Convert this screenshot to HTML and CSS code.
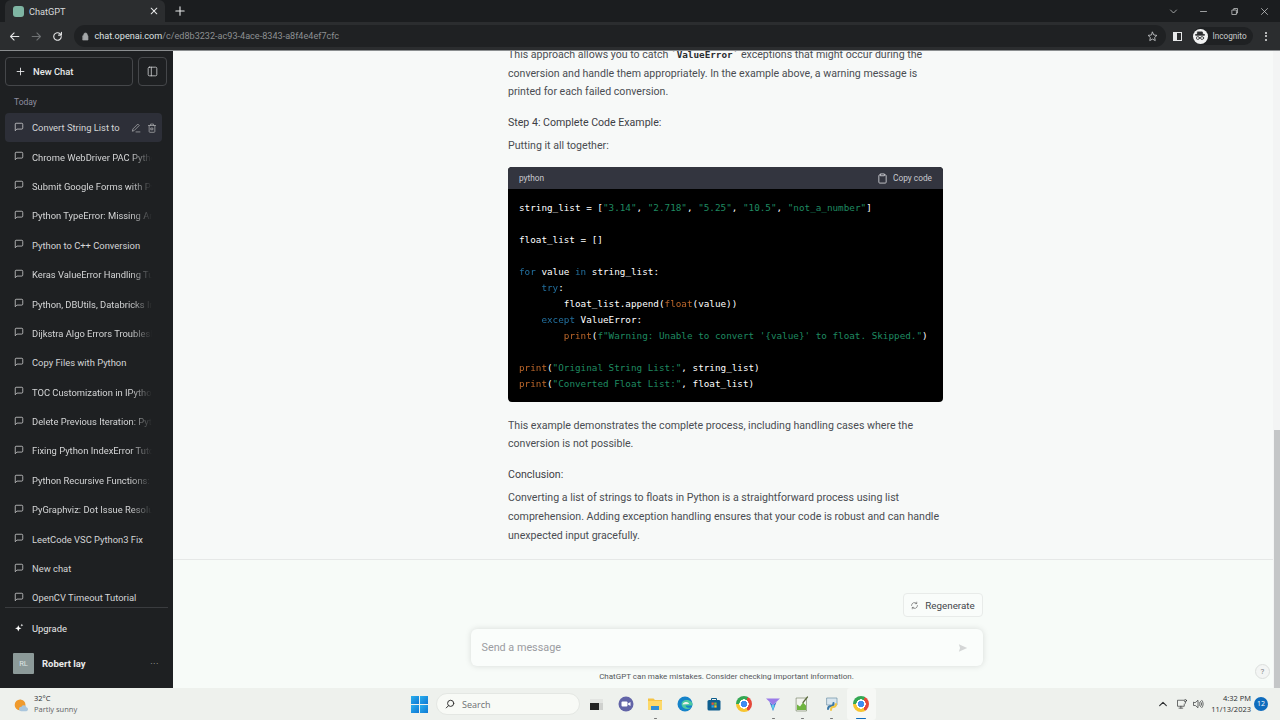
FILE: index.html
```html
<!DOCTYPE html>
<html lang="en">
<head>
    <meta charset="UTF-8">
    <title>ChatGPT</title>
    <link rel="stylesheet" href="styles.css">
</head>
<body>
    <svg class="defs">
        <symbol id="bubble" viewBox="0 0 24 24"><path d="M21 15a2 2 0 0 1-2 2H7l-4 4V5a2 2 0 0 1 2-2h14a2 2 0 0 1 2 2z"/></symbol>
    </svg>

    <header class="browser">
        <div class="tabstrip">
            <div class="tab">
                <span class="favicon"></span>
                <span class="tab-title">ChatGPT</span>
                <svg class="tab-close" viewBox="0 0 10 10"><path d="M1.5 1.5l7 7M8.5 1.5l-7 7"/></svg>
            </div>
            <svg class="new-tab" viewBox="0 0 12 12"><path d="M6 1v10M1 6h10"/></svg>
            <div class="window-btns">
                <svg viewBox="0 0 12 12"><path d="M2 4l4 4 4-4"/></svg>
                <svg viewBox="0 0 12 12"><path d="M2 6h8"/></svg>
                <svg viewBox="0 0 12 12"><path d="M3 4h5.500v6H3zM5 4V2h5v6H8.500"/></svg>
                <svg viewBox="0 0 12 12"><path d="M2 2l8 8M10 2l-8 8"/></svg>
            </div>
        </div>
        <div class="toolbar">
            <svg class="nav-btn" viewBox="0 0 14 14"><path d="M12.500 7H2M6.500 2.500L2 7l4.500 4.500"/></svg>
            <svg class="nav-btn dim" viewBox="0 0 14 14"><path d="M1.500 7H12M7.500 2.500L12 7l-4.500 4.500"/></svg>
            <svg class="nav-btn" viewBox="0 0 14 14"><path d="M11.800 7a4.800 4.800 0 1 1-1.400-3.400L12 5.200M12 1.500v3.700H8.300"/></svg>
            <div class="omnibox">
                <svg class="lock" viewBox="0 0 10 12"><path d="M2.500 5V3.500a2.500 2.500 0 0 1 5 0V5M1.500 5h7v6h-7z"/></svg>
                <span class="url">chat.openai.com<span class="url-rest">/c/ed8b3232-ac93-4ace-8343-a8f4e4ef7cfc</span></span>
                <svg class="star" viewBox="0 0 14 14"><path d="M7 1.500l1.700 3.600 3.900.5-2.900 2.700.8 3.900L7 10.300l-3.500 1.900.8-3.900L1.400 5.600l3.900-.5z"/></svg>
            </div>
            <span class="side-panel"></span>
            <div class="incognito">
                <span class="spy">
                    <svg viewBox="0 0 16 16"><path class="spy-hat" d="M5 2.500h6l1 3.500h2v1H2V6h2z"/><circle cx="5.200" cy="10.700" r="2"/><circle cx="10.800" cy="10.700" r="2"/><path d="M7.200 10.500h1.600"/></svg>
                </span>
                <span>Incognito</span>
            </div>
            <span class="kebab"><i></i><i></i><i></i></span>
        </div>
    </header>

    <div class="app">
        <nav class="sidebar">
            <div class="side-top">
                <div class="new-chat">
                    <svg viewBox="0 0 12 12"><path d="M6 1.500v9M1.500 6h9"/></svg>
                    <span>New Chat</span>
                </div>
                <div class="hide-side">
                    <svg viewBox="0 0 14 14"><rect x="1.500" y="1.500" width="11" height="11" rx="1.500"/><path d="M5.500 1.500v11"/></svg>
                </div>
            </div>
            <div class="day-label">Today</div>
            <ul class="chat-list">
                <li class="chat-item active">
                    <svg class="bubble"><use href="#bubble"/></svg>
                    <span class="chat-name">Convert String List to</span>
                    <svg class="row-icon" viewBox="0 0 14 14"><path d="M2 11l.7-2.700L9.500 1.500l2 2-6.800 6.800zM7 12.500h5.500"/></svg>
                    <svg class="row-icon" viewBox="0 0 14 14"><path d="M3 3.500v8.500a1 1 0 0 0 1 1h6a1 1 0 0 0 1-1V3.500M2 3.500h10M5 3.500V1.500h4v2M5.800 7h2.400v2.500H5.800z"/></svg>
                </li>
                <li class="chat-item"><svg class="bubble"><use href="#bubble"/></svg><span class="chat-name fade">Chrome WebDriver PAC Python</span></li>
                <li class="chat-item"><svg class="bubble"><use href="#bubble"/></svg><span class="chat-name fade">Submit Google Forms with Python</span></li>
                <li class="chat-item"><svg class="bubble"><use href="#bubble"/></svg><span class="chat-name fade">Python TypeError: Missing Argument</span></li>
                <li class="chat-item"><svg class="bubble"><use href="#bubble"/></svg><span class="chat-name">Python to C++ Conversion</span></li>
                <li class="chat-item"><svg class="bubble"><use href="#bubble"/></svg><span class="chat-name fade">Keras ValueError Handling Tutorial</span></li>
                <li class="chat-item"><svg class="bubble"><use href="#bubble"/></svg><span class="chat-name fade">Python, DBUtils, Databricks Integration</span></li>
                <li class="chat-item"><svg class="bubble"><use href="#bubble"/></svg><span class="chat-name fade">Dijkstra Algo Errors Troubleshoot</span></li>
                <li class="chat-item"><svg class="bubble"><use href="#bubble"/></svg><span class="chat-name">Copy Files with Python</span></li>
                <li class="chat-item"><svg class="bubble"><use href="#bubble"/></svg><span class="chat-name fade">TOC Customization in IPython</span></li>
                <li class="chat-item"><svg class="bubble"><use href="#bubble"/></svg><span class="chat-name fade">Delete Previous Iteration: Python</span></li>
                <li class="chat-item"><svg class="bubble"><use href="#bubble"/></svg><span class="chat-name fade">Fixing Python IndexError Tutorial</span></li>
                <li class="chat-item"><svg class="bubble"><use href="#bubble"/></svg><span class="chat-name fade">Python Recursive Functions: Guide</span></li>
                <li class="chat-item"><svg class="bubble"><use href="#bubble"/></svg><span class="chat-name fade">PyGraphviz: Dot Issue Resolution</span></li>
                <li class="chat-item"><svg class="bubble"><use href="#bubble"/></svg><span class="chat-name">LeetCode VSC Python3 Fix</span></li>
                <li class="chat-item"><svg class="bubble"><use href="#bubble"/></svg><span class="chat-name">New chat</span></li>
                <li class="chat-item"><svg class="bubble"><use href="#bubble"/></svg><span class="chat-name">OpenCV Timeout Tutorial</span></li>
            </ul>
            <div class="side-bottom">
                <div class="upgrade">
                    <svg viewBox="0 0 14 14"><path d="M6 3l1.300 3.200L10.500 7.500 7.300 8.800 6 12 4.700 8.800 1.500 7.500l3.200-1.300zM11 1l.6 1.400L13 3l-1.400.6L11 5l-.6-1.400L9 3l1.400-.6z"/></svg>
                    <span>Upgrade</span>
                </div>
                <div class="user">
                    <span class="avatar">RL</span>
                    <span class="user-name">Robert lay</span>
                    <span class="dots">···</span>
                </div>
            </div>
        </nav>

        <main class="main">
            <div class="thread">
                <article class="answer">
                    <p>This approach allows you to catch <code><span class="tick">`</span>ValueError<span class="tick">`</span></code> exceptions that might occur during the conversion and handle them appropriately. In the example above, a warning message is printed for each failed conversion.</p>
                    <p class="step">Step 4: Complete Code Example:</p>
                    <p class="lead">Putting it all together:</p>
                    <div class="code-block">
                        <div class="code-head">
                            <span>python</span>
                            <span class="copy">
                                <svg viewBox="0 0 12 12"><path d="M4 2H3a1 1 0 0 0-1 1v7a1 1 0 0 0 1 1h6a1 1 0 0 0 1-1V3a1 1 0 0 0-1-1H8M4 1h4v2H4z"/></svg>
                                Copy code
                            </span>
                        </div>
<pre class="code"><b>string_list = [</b><i class="str">"3.14"</i><b>, </b><i class="str">"2.718"</i><b>, </b><i class="str">"5.25"</i><b>, </b><i class="str">"10.5"</i><b>, </b><i class="str">"not_a_number"</i><b>]</b>

<b>float_list = []</b>

<i class="kw">for</i> <b>value</b> <i class="kw">in</i> <b>string_list:</b>
    <i class="kw">try</i><b>:</b>
        <b>float_list.append(</b><i class="fn">float</i><b>(value))</b>
    <i class="kw">except</i> <b>ValueError:</b>
        <i class="fn">print</i><b>(</b><i class="str">f"Warning: Unable to convert '{value}' to float. Skipped."</i><b>)</b>

<i class="fn">print</i><b>(</b><i class="str">"Original String List:"</i><b>, string_list)</b>
<i class="fn">print</i><b>(</b><i class="str">"Converted Float List:"</i><b>, float_list)</b></pre>
                    </div>
                    <p class="after-code">This example demonstrates the complete process, including handling cases where the conversion is not possible.</p>
                    <p class="conclusion">Conclusion:</p>
                    <p class="lead last">Converting a list of strings to floats in Python is a straightforward process using list comprehension. Adding exception handling ensures that your code is robust and can handle unexpected input gracefully.</p>
                </article>
            </div>
            <section class="composer">
                <div class="composer-inner">
                    <div class="regen">
                        <svg viewBox="0 0 12 12"><path d="M10 6a4 4 0 0 1-7 2.600M2 6a4 4 0 0 1 7-2.600M9 1.500v2H7M3 10.500v-2h2"/></svg>
                        <span>Regenerate</span>
                    </div>
                    <div class="prompt">
                        <span>Send a message</span>
                        <svg viewBox="0 0 12 12"><path d="M1 1.500L11 6 1 10.500 2.500 6z"/></svg>
                    </div>
                </div>
                <div class="disclaimer">ChatGPT can make mistakes. Consider checking important information.</div>
            </section>
            <div class="scrollbar"><div class="thumb"></div></div>
            <div class="help">?</div>
        </main>
    </div>

    <footer class="taskbar">
        <div class="weather">
            <svg viewBox="0 0 20 20">
                <path class="w-cloud-back" d="M6 9a3.500 3.500 0 0 1 6.500-2A3 3 0 0 1 13 12H6a1.500 1.500 0 0 1 0-3z"/>
                <circle class="w-sun" cx="9" cy="11" r="6"/>
                <path class="w-cloud" d="M10 18a2.500 2.500 0 0 1 .5-5 3 3 0 0 1 5.500.5 2.300 2.300 0 0 1 0 4.500z"/>
            </svg>
            <div class="weather-text">
                <span>32°C</span>
                <span class="weather-sub">Partly sunny</span>
            </div>
        </div>
        <div class="task-icons">
            <span class="win"><i></i><i></i><i></i><i></i></span>
            <div class="search">
                <svg viewBox="0 0 12 12"><circle cx="6.800" cy="5.200" r="3.700"/><path d="M4.200 8L1.500 10.700"/></svg>
                <span>Search</span>
            </div>
            <span class="task"><span class="taskview"></span></span>
            <span class="task">
                <svg viewBox="0 0 16 16"><circle cx="8" cy="8" r="7.500" fill="#6264a7"/><rect x="3.500" y="5.500" width="6" height="5" rx="1" fill="#fff"/><path d="M10 7.500l2.500-1.500v4L10 8.500z" fill="#fff"/></svg>
            </span>
            <span class="task open">
                <svg viewBox="0 0 16 16"><path d="M1 2.500h5.500l1.500 1.500h7v10H1z" fill="#f5c344"/><rect x="1" y="5" width="14" height="9" fill="#fcd96a"/><rect x="4" y="10" width="8" height="4" fill="#2d8fd8"/></svg>
            </span>
            <span class="task">
                <svg viewBox="0 0 16 16"><circle cx="8" cy="8" r="7.500" fill="#1583c9"/><path d="M15.500 8.500c0-3-3-4.500-6-4.500-3 0-5 2-5 4 0 3 3 5 6 5 2 0 3-1 3.500-1.500-2 .5-5 .5-5.500-2h7z" fill="#4cc9a0"/><path d="M5.500 8.500C6 6.500 8 6 9.500 6S12 7 12 8z" fill="#eef1ed"/></svg>
            </span>
            <span class="task">
                <svg viewBox="0 0 16 16"><path d="M5.500 4V2.500h5V4" fill="none" stroke="#0a5c8c"/><rect x="1.500" y="4" width="13" height="10.500" rx="1.500" fill="#0f5f8f"/><rect x="5.500" y="6.500" width="2.300" height="2.300" fill="#e8583a"/><rect x="8.300" y="6.500" width="2.300" height="2.300" fill="#7cbb3d"/><rect x="5.500" y="9.300" width="2.300" height="2.300" fill="#2aa3e3"/><rect x="8.300" y="9.300" width="2.300" height="2.300" fill="#f6c12e"/></svg>
            </span>
            <span class="task"><span class="chrome-logo"></span></span>
            <span class="task open">
                <svg viewBox="0 0 16 16"><path d="M1 2.500h14L8 9z" fill="#9a7be8"/><path d="M4.500 6L8 9l3.500-3L8 15z" fill="#3f76d8"/><path d="M6.500 9h3L8 15z" fill="#5fd0e6"/></svg>
            </span>
            <span class="task open">
                <svg viewBox="0 0 16 16"><rect x="2.500" y="2" width="10" height="13" fill="#f3f4ee" stroke="#6b7a5c" stroke-width=".6"/><path d="M3 14V8.500l3 2 3-4 3 3V14z" fill="#6fb43f"/><path d="M9 6.500L13.500 1" stroke="#5a6a3c" stroke-width="1.200"/></svg>
            </span>
            <span class="task open">
                <svg viewBox="0 0 16 16"><rect x="3" y="2" width="10" height="7" fill="#d9e6ee" stroke="#6b8fa8" stroke-width=".7"/><path d="M4 13c0-3 2-3 3.500-3s2-1 2-3" fill="none" stroke="#3a78a8" stroke-width="2"/><path d="M12 8c0 3-2 3-3 3s-2 1-2 3" fill="none" stroke="#f2c744" stroke-width="2"/></svg>
            </span>
            <span class="task active"><span class="chrome-logo"></span></span>
        </div>
        <div class="tray">
            <svg class="tray-up" viewBox="0 0 12 12"><path d="M2 8l4-4 4 4"/></svg>
            <svg class="tray-icon" viewBox="0 0 16 16"><path d="M10 3H2v8h9V8M4 13.500h5M6.500 11v2.500"/><circle cx="12.500" cy="3.500" r="1.500"/><path d="M12.500 5v2"/></svg>
            <svg class="tray-icon" viewBox="0 0 16 16"><path d="M2 6v4h2.500L8 13V3L4.500 6zM10 6a3 3 0 0 1 0 4M11.500 4.500a5 5 0 0 1 0 7M13 3a7 7 0 0 1 0 10"/></svg>
            <div class="clock">
                <span>4:32 PM</span>
                <span>11/13/2023</span>
            </div>
            <span class="notif">12</span>
        </div>
    </footer>
</body>
</html>
```

FILE: styles.css
```css
* {
    box-sizing: border-box;
}
html, body {
    margin: 0;
    height: 720px;
    overflow: hidden;
}
body {
    display: flex;
    flex-direction: column;
    font-family: Roboto, "Liberation Sans", sans-serif;
    background: #f7f9f8;
}
svg {
    display: block;
    fill: none;
    stroke: currentColor;
    stroke-linecap: round;
    stroke-linejoin: round;
}
.defs {
    display: none;
}

/* browser chrome */
.browser {
    height: 51px;
    flex: none;
    color: #d8dadb;
    border-bottom: 1px solid #8b8e90;
}
.tabstrip {
    height: 22px;
    background: #1b1d1f;
    display: flex;
    align-items: flex-end;
    padding-left: 5px;
}
.tab {
    width: 160px;
    height: 22px;
    background: #2b2d2f;
    border-radius: 6px 6px 0 0;
    display: flex;
    align-items: center;
    padding: 0 7px 0 8px;
    font-size: 9.200px;
}
.favicon {
    width: 11px;
    height: 11px;
    border-radius: 3px;
    background: #7fb5a3;
    margin-right: 5px;
}
.tab-title {
    flex: 1;
}
.tab-close {
    width: 8px;
    height: 8px;
    stroke-width: 1.300;
    color: #e4e5e6;
}
.new-tab {
    width: 10px;
    height: 10px;
    margin: 0 0 6px 10px;
    stroke-width: 1.300;
    color: #e8e9ea;
}
.window-btns {
    margin-left: auto;
    height: 22px;
    display: flex;
    align-items: center;
    gap: 21.500px;
    padding-right: 11px;
    color: #c9cbcc;
}
.window-btns svg {
    width: 9px;
    height: 9px;
    stroke-width: 1;
}
.toolbar {
    height: 28px;
    background: #2b2d2f;
    display: flex;
    align-items: center;
    padding-left: 9px;
}
.nav-btn {
    width: 11px;
    height: 11px;
    margin-right: 10.500px;
    stroke-width: 1.400;
    color: #e4e5e6;
}
.nav-btn.dim {
    color: #6e7173;
}
.omnibox {
    width: 1092px;
    height: 22px;
    background: #1f2123;
    border-radius: 11px;
    display: flex;
    align-items: center;
    padding: 0 8px 0 8px;
    font-size: 9.100px;
}
.lock {
    width: 7px;
    height: 9px;
    margin-right: 6px;
    color: #a4a7a9;
    fill: #a4a7a9;
}
.url {
    flex: 1;
    color: #dfe1e2;
}
.url-rest {
    color: #8d9092;
}
.star {
    width: 11px;
    height: 11px;
    color: #c4c6c8;
    stroke-width: 1.100;
}
.side-panel {
    width: 9px;
    height: 9px;
    margin-left: 7px;
    border: 1px solid #e8e9ea;
    border-left-width: 4px;
    background: #2b2d2f;
}
.incognito {
    width: 60px;
    height: 18px;
    margin-left: 11px;
    background: #1f2123;
    border-radius: 9px;
    display: flex;
    align-items: center;
    gap: 5px;
    font-size: 8.200px;
    color: #c9cbcc;
}
.spy {
    width: 15px;
    height: 15px;
    border-radius: 50%;
    background: #f2f3f3;
    display: flex;
    align-items: center;
    justify-content: center;
    color: #2b2d2f;
}
.spy svg {
    width: 12px;
    height: 12px;
}
.spy-hat {
    fill: #2b2d2f;
}
.kebab {
    margin-left: 12px;
    display: flex;
    flex-direction: column;
    gap: 1.500px;
}
.kebab i {
    width: 2px;
    height: 2px;
    background: #e4e5e6;
    border-radius: 50%;
}

/* app */
.app {
    flex: 1;
    min-height: 0;
    display: flex;
}
.sidebar {
    width: 173px;
    flex: none;
    background: #1e2022;
    color: #e8e9ea;
    display: flex;
    flex-direction: column;
    padding: 6px 5px 0;
    font-size: 9.400px;
}
.side-top {
    display: flex;
    gap: 5px;
    height: 29px;
    flex: none;
}
.new-chat, .hide-side {
    border: 1px solid #45474a;
    border-radius: 4px;
    display: flex;
    align-items: center;
}
.new-chat {
    width: 128px;
    padding-left: 10px;
    gap: 8px;
    font-weight: 500;
    font-size: 9.400px;
}
.new-chat svg {
    width: 9px;
    height: 9px;
    stroke-width: 1.200;
}
.hide-side {
    width: 29px;
    justify-content: center;
}
.hide-side svg {
    width: 11px;
    height: 11px;
    color: #d5d6d7;
}
.day-label {
    height: 27px;
    padding: 11px 0 0 9px;
    font-size: 8.500px;
    color: #8e8ea0;
    flex: none;
}
.chat-list {
    list-style: none;
    margin: 0;
    padding: 0;
    flex: none;
    width: 157px;
    height: 494px;
    overflow: hidden;
}
.chat-item {
    height: 29.400px;
    display: flex;
    align-items: center;
    padding: 0 10px 0 9px;
    border-radius: 4px;
    color: #d4d5d6;
}
.chat-item.active {
    background: #2d2f38;
    padding-right: 0;
}
.bubble {
    width: 10px;
    height: 10px;
    flex: none;
    margin-right: 8px;
    margin-top: -2px;
    color: #c6c7c8;
    stroke-width: 2;
}
.chat-name {
    white-space: nowrap;
    overflow: hidden;
    flex: 1;
}
.chat-name.fade {
    -webkit-mask-image: linear-gradient(to right, #000 82%, transparent);
    mask-image: linear-gradient(to right, #000 82%, transparent);
}
.row-icon {
    width: 10px;
    height: 10px;
    flex: none;
    margin-right: 5.500px;
    color: #a5a6a8;
    stroke-width: 1.100;
}
.side-bottom {
    flex: 1;
    border-top: 1px solid #3a3c3f;
}
.upgrade {
    height: 34px;
    margin-top: 3px;
    display: flex;
    align-items: center;
    padding-left: 9px;
    gap: 8px;
}
.upgrade svg {
    width: 10px;
    height: 10px;
    fill: #fff;
    stroke: none;
}
.user {
    display: flex;
    align-items: center;
    padding-left: 8px;
    height: 36px;
}
.avatar {
    width: 21px;
    height: 21px;
    background: #8c9a99;
    color: #dfe4e4;
    font-size: 7.500px;
    display: flex;
    align-items: center;
    justify-content: center;
    margin-right: 8px;
    border-radius: 1px;
}
.user-name {
    font-weight: 700;
    font-size: 9.500px;
    flex: 1;
}
.dots {
    color: #a5a6a8;
    margin-right: 9px;
    letter-spacing: .5px;
}

/* main column */
.main {
    position: relative;
    flex: 1;
    min-width: 0;
    display: flex;
    flex-direction: column;
    background: #f7f9f8;
}
.thread {
    height: 509px;
    overflow: hidden;
    flex: none;
    display: flex;
    justify-content: center;
    padding-right: 2px;
    border-bottom: 1px solid #e6e8e7;
}
.answer {
    width: 435px;
    margin-top: -5px;
    font-size: 10.600px;
    line-height: 18.700px;
    color: #4a4d52;
}
.answer p {
    margin: 0;
}
.answer .step {
    margin-top: 12px;
    color: #3d4045;
}
.answer .lead {
    margin-top: 4px;
}
.answer .lead.last {
    margin-top: 5px;
}
.answer code {
    font-family: "DejaVu Sans Mono", monospace;
    font-weight: 700;
    font-size: 9.300px;
    color: #2a2c30;
}
.tick {
    font-weight: 400;
    color: #8a8d90;
}
.code-block {
    margin-top: 11.600px;
    background: #000;
    border-radius: 4px;
    overflow: hidden;
}
.code-head {
    height: 22px;
    background: #33353f;
    color: #c8c9ce;
    display: flex;
    align-items: center;
    justify-content: space-between;
    padding: 0 11px;
    font-size: 8.300px;
}
.copy {
    display: flex;
    align-items: center;
    gap: 5px;
}
.copy svg {
    width: 11px;
    height: 11px;
}
.code {
    margin: 0;
    padding: 11px 11px 10px;
    font-family: "DejaVu Sans Mono", "Liberation Mono", monospace;
    font-size: 9.300px;
    line-height: 16px;
    color: #fff;
}
.code b {
    font-weight: 400;
}
.code i {
    font-style: normal;
}
.code .str {
    color: #1f8a61;
}
.code .kw {
    color: #2e95d3;
    opacity: .75;
}
.code .fn {
    color: #df7a33;
    opacity: .85;
}
.answer .after-code {
    margin-top: 14.600px;
}
.answer .conclusion {
    margin-top: 11.600px;
    color: #3d4045;
}

/* input area */
.composer {
    flex: 1;
    min-height: 0;
    background: #f7fbf8;
    position: relative;
    display: flex;
    flex-direction: column;
    align-items: center;
}
.composer-inner {
    width: 512px;
    margin-top: 33px;
    display: flex;
    flex-direction: column;
    align-items: flex-end;
    gap: 12px;
}
.regen {
    height: 24px;
    width: 80px;
    border: 1px solid #e8ebe9;
    border-radius: 4px;
    background: #f9fcfa;
    display: flex;
    align-items: center;
    justify-content: center;
    gap: 6px;
    font-size: 9.800px;
    color: #44474c;
}
.regen svg {
    width: 9px;
    height: 9px;
    color: #777;
}
.prompt {
    width: 512px;
    height: 37px;
    background: #fafdfb;
    border-radius: 6px;
    box-shadow: 0 0 6px rgba(0, 0, 0, .13);
    display: flex;
    align-items: center;
    justify-content: space-between;
    padding: 0 15px 0 11px;
    font-size: 10.800px;
    color: #9a9ca1;
}
.prompt svg {
    width: 10px;
    height: 10px;
    fill: #d4d6d6;
    stroke: none;
}
.disclaimer {
    margin-top: 6px;
    font-size: 8px;
    line-height: 10px;
    color: #55585c;
}
.scrollbar {
    position: absolute;
    top: 0;
    bottom: 0;
    right: 0;
    width: 7px;
    background: #f3f4f4;
}
.thumb {
    position: absolute;
    top: 379px;
    bottom: 0;
    left: 1px;
    right: 0;
    background: #c4c6c7;
}
.help {
    position: absolute;
    right: 10px;
    bottom: 9px;
    width: 15px;
    height: 15px;
    border: 1px solid #dcdfdd;
    border-radius: 50%;
    background: #f3f5f4;
    font-size: 8px;
    line-height: 13px;
    text-align: center;
    color: #7d8084;
}

/* taskbar */
.taskbar {
    height: 32px;
    flex: none;
    background: #eef1ed;
    display: flex;
    align-items: center;
    font-family: "Open Sans", "Liberation Sans", sans-serif;
}
.weather {
    width: 410px;
    flex: none;
    display: flex;
    align-items: center;
    padding-left: 12px;
    gap: 4px;
}
.weather svg {
    width: 18px;
    height: 18px;
    stroke: none;
}
.w-cloud-back {
    fill: #8fb6d8;
}
.w-sun {
    fill: #ef9a2c;
}
.w-cloud {
    fill: #a9c6dd;
}
.weather-text {
    display: flex;
    flex-direction: column;
    font-size: 7.500px;
    line-height: 11px;
    color: #2a2c2e;
}
.weather-sub {
    color: #5f6265;
}
.task-icons {
    display: flex;
    align-items: center;
    height: 32px;
}
.win {
    width: 17px;
    height: 17px;
    display: grid;
    grid-template-columns: 1fr 1fr;
    gap: 1px;
    margin-right: 8px;
    margin-left: 1px;
}
.win i {
    background: linear-gradient(135deg, #2bb0ee, #0f78d4);
}
.search {
    width: 144px;
    height: 22px;
    border-radius: 11px;
    background: #f8faf6;
    border: 1px solid #e4e7e3;
    display: flex;
    align-items: center;
    padding-left: 8px;
    gap: 7px;
    font-size: 9px;
    color: #6c6f72;
    margin-right: 2px;
}
.search svg {
    width: 10px;
    height: 10px;
    color: #333;
    stroke-width: 1.200;
}
.task {
    width: 29.400px;
    height: 32px;
    display: flex;
    align-items: center;
    justify-content: center;
    position: relative;
}
.task svg {
    width: 16px;
    height: 16px;
    stroke: none;
}
.task.open::after, .task.active::after {
    content: "";
    position: absolute;
    left: 50%;
    bottom: 1px;
    width: 3px;
    height: 1.500px;
    margin-left: -1.500px;
    background: #777;
    border-radius: 1px;
}
.task.active {
    background: #f6f8f5;
    border-radius: 3px;
}
.task.active::after {
    width: 10px;
    margin-left: -5px;
    background: #0f6cbd;
}
.taskview {
    width: 13px;
    height: 11px;
    background: linear-gradient(to right, #222 70%, #cfd1ce 70%);
    border-top: 4px solid #e3e5e2;
}
.chrome-logo {
    width: 16px;
    height: 16px;
    border-radius: 50%;
    background:
        radial-gradient(circle, #3f8cf0 0 3px, #fff 3.300px 4.500px, transparent 4.800px),
        conic-gradient(from 30deg, #e5483a 0 120deg, #f7c52f 120deg 240deg, #34a853 240deg 360deg);
    background-repeat: no-repeat;
}
.tray {
    margin-left: auto;
    display: flex;
    align-items: center;
    padding-right: 12px;
    color: #2a2c2e;
}
.tray-up {
    width: 10px;
    height: 10px;
    stroke-width: 1.300;
    margin-right: 8px;
}
.tray-icon {
    width: 12px;
    height: 12px;
    margin-right: 4px;
    stroke-width: .9;
}
.clock {
    width: 38px;
    margin-left: 5px;
    display: flex;
    flex-direction: column;
    align-items: flex-end;
    font-size: 7.500px;
    line-height: 11px;
    white-space: nowrap;
}
.notif {
    width: 14px;
    height: 14px;
    margin-left: 3px;
    border-radius: 50%;
    background: #0f6cbd;
    color: #fff;
    font-size: 7px;
    line-height: 14px;
    text-align: center;
}
```
